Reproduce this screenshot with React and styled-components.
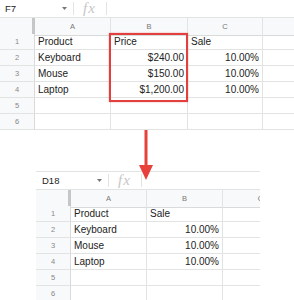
import React from "react";
import styled, { createGlobalStyle } from "styled-components";

const Global = createGlobalStyle`
  html, body { margin: 0; padding: 0; background: #fff; }
  body { font-family: "Liberation Sans", Arial, sans-serif; }
`;

const Page = styled.div`
  position: relative;
  width: 294px;
  height: 300px;
  overflow: hidden;
  background: #fff;
`;

const SheetWrap = styled.div`
  position: relative;
  width: ${(p) => p.$width}px;
  margin-left: ${(p) => p.$left || 0}px;
  overflow: hidden;
`;

const FormulaBar = styled.div`
  box-sizing: border-box;
  height: ${(p) => (p.$topLine ? 19 : 18)}px;
  display: flex;
  align-items: center;
  border-bottom: 1px solid #e2e3e3;
  border-top: ${(p) => (p.$topLine ? "1px solid #e2e3e3" : "none")};
  background: #fff;
`;

const NameBox = styled.div`
  width: 61px;
  padding-left: ${(p) => p.$pad}px;
  box-sizing: border-box;
  font-size: 9.5px;
  color: #222;
`;

const Caret = styled.svg`
  width: 5px;
  height: 3px;
  margin-left: ${(p) => p.$ml}px;
`;

const Divider = styled.div`
  width: 1px;
  height: 13px;
  background: #e2e3e3;
  margin-left: ${(p) => p.$ml}px;
`;

const Fx = styled.span`
  font-family: "Liberation Serif", "Times New Roman", serif;
  font-style: italic;
  font-size: 15px;
  letter-spacing: 1px;
  color: #c6c6c6;
  margin-left: 9px;
  width: 23px;
  line-height: 1;
`;

const Grid = styled.div`
  display: grid;
  grid-template-columns: ${(p) => p.$cols};
  grid-auto-rows: 16px;
`;

const HeadCell = styled.div`
  box-sizing: border-box;
  height: 18px;
  background: #f8f9fa;
  border-right: ${(p) => (p.$freeze ? "3px solid #c4c7c5" : "1px solid #e2e3e3")};
  border-bottom: 1px solid #d9dbdb;
  display: flex;
  align-items: center;
  justify-content: center;
  font-size: 7.5px;
  color: #777;
`;

const RowNum = styled.div`
  box-sizing: border-box;
  height: 16px;
  background: #f8f9fa;
  border-right: 1px solid #d9dbdb;
  border-bottom: 1px solid #e2e3e3;
  display: flex;
  align-items: center;
  justify-content: center;
  font-size: 7.5px;
  color: #888;
`;

const Cell = styled.div`
  box-sizing: border-box;
  height: 16px;
  border-right: 1px solid #e2e3e3;
  border-bottom: 1px solid #e2e3e3;
  display: flex;
  align-items: center;
  justify-content: ${(p) => (p.$right ? "flex-end" : "flex-start")};
  padding: 0 3px;
  font-size: 10px;
  color: #222;
  white-space: nowrap;
  overflow: hidden;
`;

const Highlight = styled.div`
  position: absolute;
  left: 109px;
  top: 33px;
  width: 79px;
  height: 69px;
  box-sizing: border-box;
  border: 2px solid #e2403f;
  box-shadow: 0 0 1.5px rgba(226, 64, 63, 0.5);
  pointer-events: none;
`;

const Spacer = styled.div`
  height: 41px;
`;

const ArrowSvg = styled.svg`
  position: absolute;
  left: 138px;
  top: 130px;
  width: 16px;
  height: 50px;
`;

const topCols = ["A", "B", "C", ""];
const topRows = [
  ["Product", "Price", "Sale", ""],
  ["Keyboard", "$240.00", "10.00%", ""],
  ["Mouse", "$150.00", "10.00%", ""],
  ["Laptop", "$1,200.00", "10.00%", ""],
  ["", "", "", ""],
  ["", "", "", ""],
];
const botCols = ["A", "B", "C"];
const botRows = [
  ["Product", "Sale", ""],
  ["Keyboard", "10.00%", ""],
  ["Mouse", "10.00%", ""],
  ["Laptop", "10.00%", ""],
  ["", "", ""],
  ["", "", ""],
];

const isRight = (v, r) => r > 0 && /[0-9]/.test(v);

function Sheet({ name, cols, letters, rows, topLine, namePad }) {
  return (
    <>
      <FormulaBar $topLine={topLine}>
        <NameBox $pad={namePad}>{name}</NameBox>
        <Caret viewBox="0 0 5 3" $ml={5 - namePad + 1}>
          <path d="M0 0 L5 0 L2.5 3 Z" fill="#777" />
        </Caret>
        <Divider $ml={6} />
        <Fx>fx</Fx>
        <Divider $ml={0} />
      </FormulaBar>
      <Grid $cols={cols}>
        <HeadCell $freeze />
        {letters.map((l, i) => (
          <HeadCell key={i}>{l}</HeadCell>
        ))}
        {rows.map((row, r) => (
          <React.Fragment key={r}>
            <RowNum>{r + 1}</RowNum>
            {row.map((v, c) => (
              <Cell key={c} $right={isRight(v, r)}>
                {v}
              </Cell>
            ))}
          </React.Fragment>
        ))}
      </Grid>
    </>
  );
}

export default function App() {
  return (
    <Page>
      <Global />
      <SheetWrap $width={294}>
        <Sheet
          name="F7"
          namePad={5}
          cols="35px 76px 77px 75px 76px"
          letters={topCols}
          rows={topRows}
        />
        <Highlight />
      </SheetWrap>
      <Spacer />
      <SheetWrap $width={224} $left={36}>
        <Sheet
          name="D18"
          namePad={6}
          topLine
          cols="35px 76px 76px 76px"
          letters={botCols}
          rows={botRows}
        />
      </SheetWrap>
      <ArrowSvg viewBox="0 0 16 50">
        <rect x="6.5" y="0" width="3" height="36" fill="#e8413c" />
        <path d="M1 35 L15 35 L8 50 Z" fill="#e8413c" />
      </ArrowSvg>
    </Page>
  );
}
